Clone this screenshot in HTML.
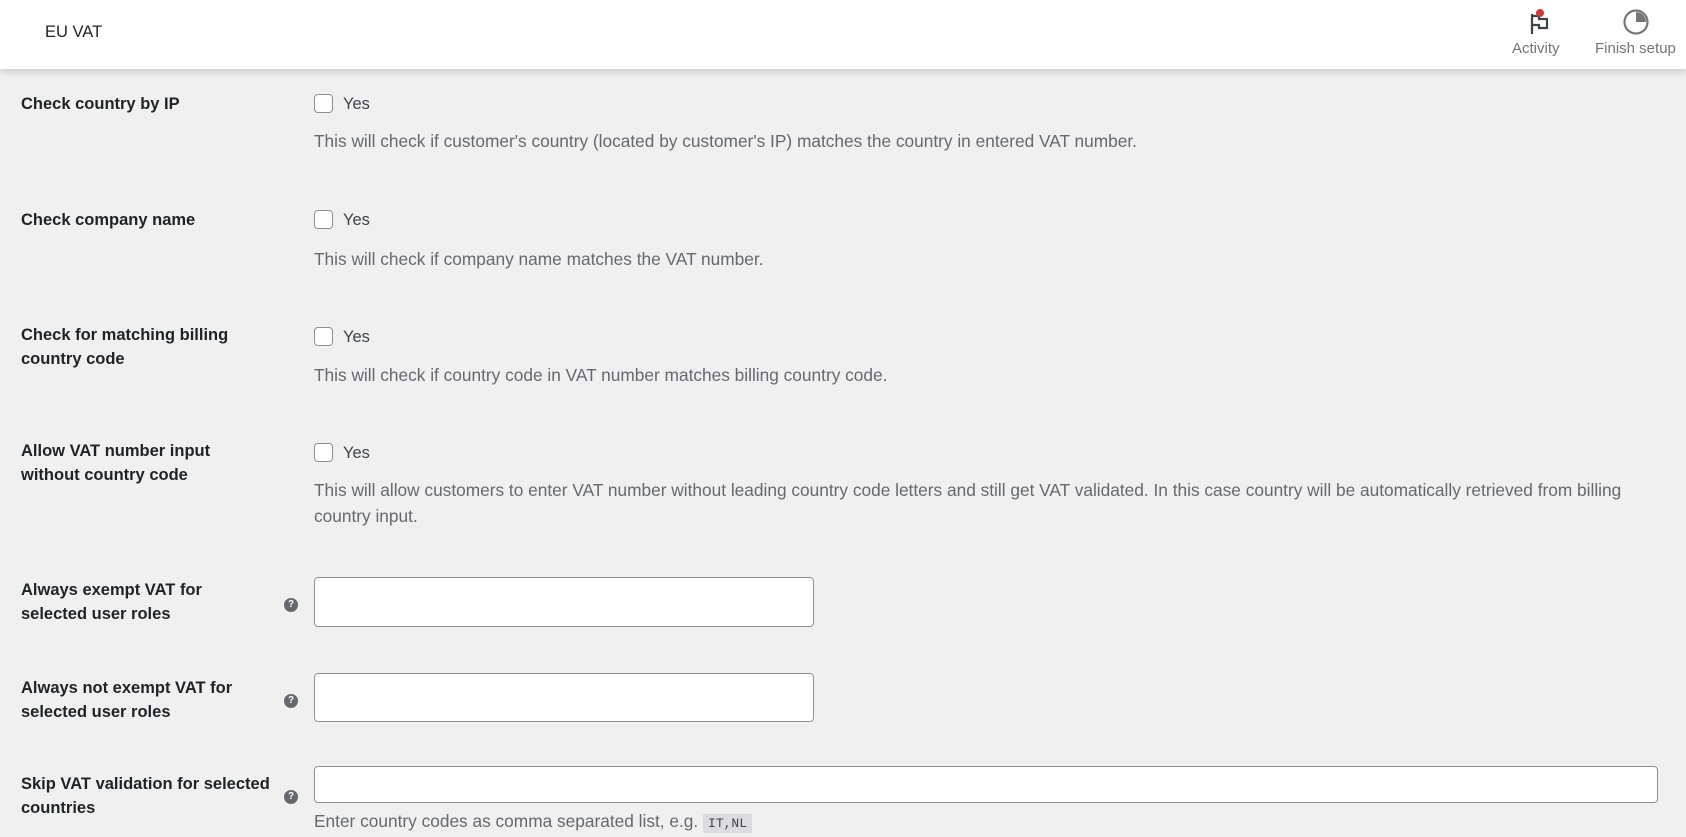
<!DOCTYPE html>
<html><head><style>
body{margin:0;width:1686px;height:821px;overflow:hidden;background:#f0f0f1;font-family:"Liberation Sans",sans-serif;color:#1d2327;position:relative}
.hdr{position:absolute;left:0;top:0;width:1686px;height:69px;background:#fff;box-shadow:0 2px 8px rgba(0,0,0,.18)}
.t{position:absolute;white-space:nowrap}
.lab{position:absolute;left:21px;font-size:16.5px;font-weight:bold;line-height:24px;color:#1d2327;white-space:nowrap}
.cb{position:absolute;left:314px;width:17px;height:17px;border:1px solid #8c8f94;border-radius:4px;background:#fff}
.yes{position:absolute;left:343px;font-size:16.5px;color:#3c434a}
.desc{position:absolute;left:314px;font-size:17.3px;color:#646970;line-height:26px;width:1345px}
.inp{position:absolute;left:314px;background:#fff;border:1px solid #8c8f94;border-radius:4px;box-sizing:border-box}
.help{position:absolute;left:284px;width:14px;height:14px;border-radius:50%;background:#646970;color:#fff;font-size:10px;font-weight:bold;text-align:center;line-height:14px}
</style></head><body>
<div class="hdr">
<div class="t" style="left:45px;top:23px;font-size:16.5px;color:#1d2327">EU VAT</div>
<svg style="position:absolute;left:1528px;top:8px" width="24" height="28" viewBox="0 0 24 28"><path d="M4 6v20M4 8h7v3h8v9h-8v-3H4" fill="none" stroke="#3c434a" stroke-width="2.2"/><circle cx="12" cy="5" r="4" fill="#d63638"/></svg>
<div class="t" style="left:1512px;top:40px;font-size:15px;color:#757575">Activity</div>
<svg style="position:absolute;left:1622px;top:8px" width="28" height="28" viewBox="0 0 28 28"><circle cx="14" cy="14" r="11.5" fill="none" stroke="#757575" stroke-width="2.2"/><path d="M14 4a10 10 0 0 1 10 10H14z" fill="#757575"/></svg>
<div class="t" style="left:1595px;top:40px;font-size:15px;color:#757575">Finish setup</div>
</div>

<div class="lab" style="top:92px">Check country by IP</div>
<div class="cb" style="top:94px"></div><div class="yes t" style="top:95px">Yes</div>
<div class="desc" style="top:128px">This will check if customer's country (located by customer's IP) matches the country in entered VAT number.</div>

<div class="lab" style="top:208px">Check company name</div>
<div class="cb" style="top:210px"></div><div class="yes t" style="top:211px">Yes</div>
<div class="desc" style="top:246px">This will check if company name matches the VAT number.</div>

<div class="lab" style="top:323px">Check for matching billing<br>country code</div>
<div class="cb" style="top:327px"></div><div class="yes t" style="top:328px">Yes</div>
<div class="desc" style="top:362px">This will check if country code in VAT number matches billing country code.</div>

<div class="lab" style="top:439px">Allow VAT number input<br>without country code</div>
<div class="cb" style="top:443px"></div><div class="yes t" style="top:444px">Yes</div>
<div class="desc" style="top:477px">This will allow customers to enter VAT number without leading country code letters and still get VAT validated. In this case country will be automatically retrieved from billing country input.</div>

<div class="lab" style="top:578px">Always exempt VAT for<br>selected user roles</div>
<div class="help" style="top:598px">?</div>
<div class="inp" style="top:577px;width:500px;height:50px"></div>

<div class="lab" style="top:676px">Always not exempt VAT for<br>selected user roles</div>
<div class="help" style="top:694px">?</div>
<div class="inp" style="top:673px;width:500px;height:49px"></div>

<div class="lab" style="top:772px">Skip VAT validation for selected<br>countries</div>
<div class="help" style="top:790px">?</div>
<div class="inp" style="top:766px;width:1344px;height:37px"></div>
<div class="desc" style="top:808px">Enter country codes as comma separated list, e.g. <span style="background:#dcdcde;font-family:'Liberation Mono',monospace;font-size:13px;padding:2px 5px;color:#3c434a">IT,NL</span></div>
</body></html>
